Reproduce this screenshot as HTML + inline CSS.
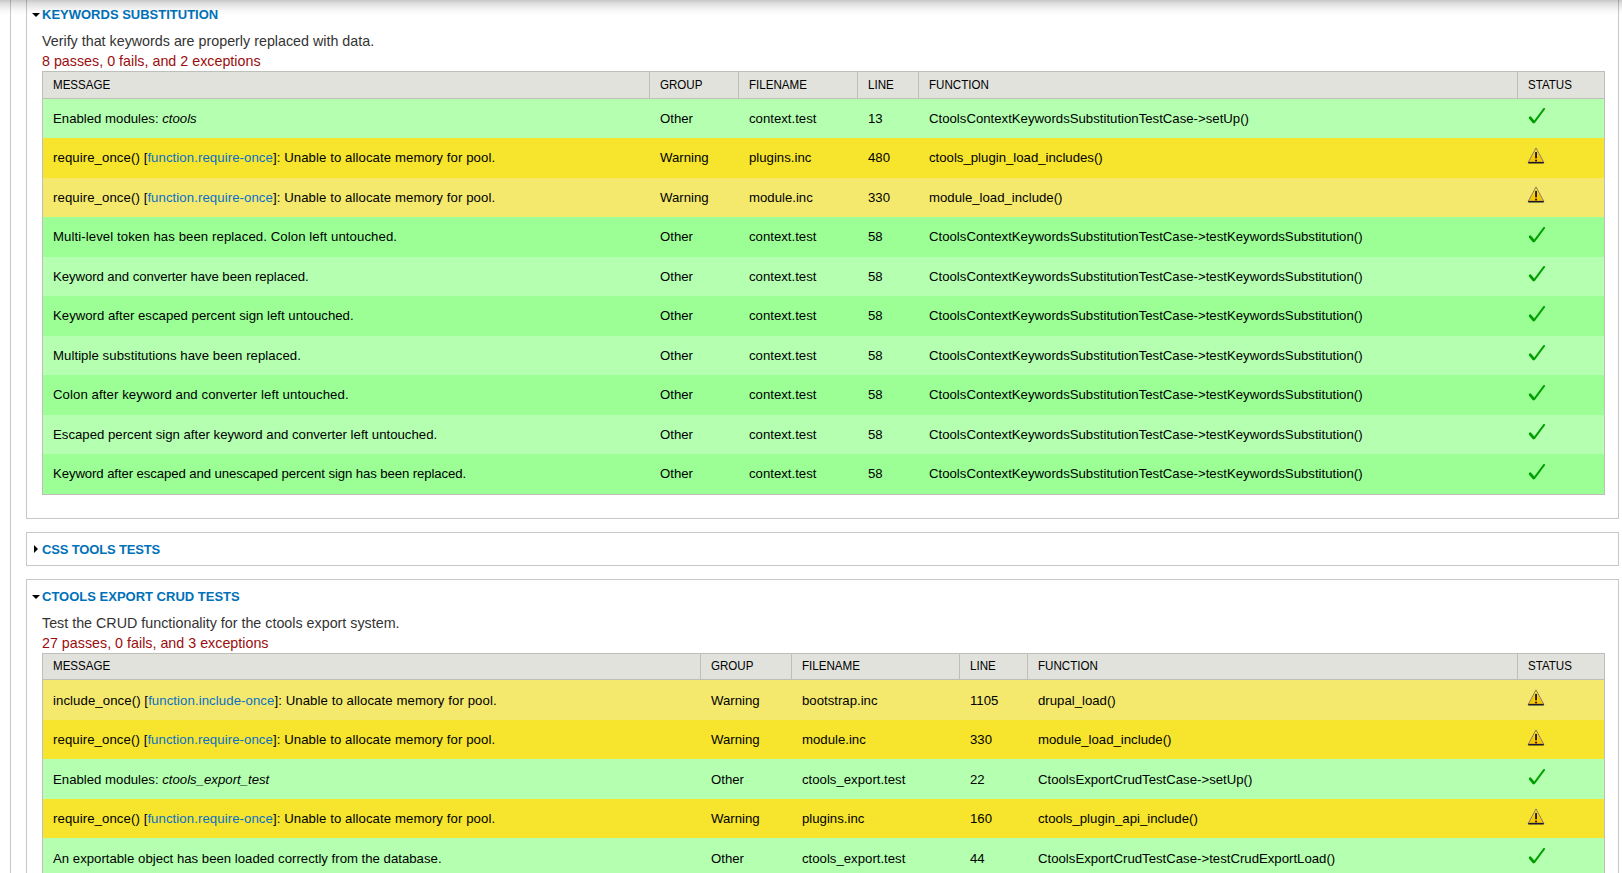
<!DOCTYPE html>
<html><head><meta charset="utf-8"><style>
html,body{margin:0;padding:0;background:#fff;width:1622px;height:873px;overflow:hidden;position:relative;font-family:"Liberation Sans",sans-serif;}
div{position:absolute;white-space:nowrap;}
.outer{left:10px;top:0;width:1px;height:873px;background:#c8c8c8}
.fs{border:1px solid #c8c8c8;box-sizing:border-box}
.legend{font-weight:bold;color:#0071b9}
.desc{color:#333}
.summary{color:#9b0d0d}
.tbl{border:1px solid #bebfb9;box-sizing:border-box;border-top:none}
.tbl>div{position:relative}
.thead{background:#e1e2dc;border:1px solid #bebfb9;box-sizing:border-box;margin:0 -1px;}
.vsep{width:1px;background:#bebfb9}
.th{font-size:12.2px;color:#000;display:flex;align-items:center;line-height:1}
.th span{display:inline-block;transform:scaleX(0.95);transform-origin:0 50%}
.tr{}
.td{font-size:13.2px;color:#000;display:flex;align-items:center;line-height:1}
.td a{color:#0a70c6;text-decoration:none}
.ls{letter-spacing:0.08px}
.td em{font-style:italic}
.icon{display:flex;align-items:center}
.icon svg{display:block}
.tbox{border:1px solid #bebfb9;box-sizing:border-box;border-top:none}
.arrow-down{width:0;height:0;border-left:4px solid transparent;border-right:4px solid transparent;border-top:4.9px solid #000}
.arrow-right{width:0;height:0;border-top:4.2px solid transparent;border-bottom:4.2px solid transparent;border-left:4.6px solid #000}
.shade{left:0;top:0;width:1622px;height:16px;background:linear-gradient(to bottom,rgba(0,0,0,.22) 0px,rgba(0,0,0,.14) 3px,rgba(0,0,0,.09) 6px,rgba(0,0,0,.035) 10px,rgba(0,0,0,0) 15px)}
</style></head><body>
<div class="outer"></div>
<div class="fs" style="left:26px;top:-2px;width:1593px;height:521px"></div>
<div class="arrow-down" style="left:32px;top:13px"></div>
<div class="legend" style="left:42px;top:4.60px;font-size:13px;line-height:20px">KEYWORDS SUBSTITUTION</div>
<div class="desc" style="left:42px;top:30.85px;font-size:14.3px;line-height:20px">Verify that keywords are properly replaced with data.</div>
<div class="summary" style="left:42px;top:51.05px;font-size:14.3px;line-height:20px">8 passes, 0 fails, and 2 exceptions</div>
<div class="tbl" style="top:71.4px;left:42px;width:1563px">
<div class="thead" style="height:27.2px">
<div class="th" style="left:10px;top:-0.3px;height:25.2px"><span>MESSAGE</span></div>
<div class="vsep" style="left:606px;top:0;height:27.2px"></div>
<div class="th" style="left:617px;top:-0.3px;height:25.2px"><span>GROUP</span></div>
<div class="vsep" style="left:695px;top:0;height:27.2px"></div>
<div class="th" style="left:706px;top:-0.3px;height:25.2px"><span>FILENAME</span></div>
<div class="vsep" style="left:814px;top:0;height:27.2px"></div>
<div class="th" style="left:825px;top:-0.3px;height:25.2px"><span>LINE</span></div>
<div class="vsep" style="left:875px;top:0;height:27.2px"></div>
<div class="th" style="left:886px;top:-0.3px;height:25.2px"><span>FUNCTION</span></div>
<div class="vsep" style="left:1474px;top:0;height:27.2px"></div>
<div class="th" style="left:1485px;top:-0.3px;height:25.2px"><span>STATUS</span></div>
</div>
<div class="tr" style="height:39.5px;background:#b4ffb0">
<div class="td" style="left:10px;top:0;height:39.5px"><span>Enabled modules: <em>ctools</em></span></div>
<div class="td" style="left:617px;top:0;height:39.5px"><span>Other</span></div>
<div class="td" style="left:706px;top:0;height:39.5px"><span>context.test</span></div>
<div class="td" style="left:825px;top:0;height:39.5px"><span>13</span></div>
<div class="td" style="left:886px;top:0;height:39.5px"><span>CtoolsContextKeywordsSubstitutionTestCase-&gt;setUp()</span></div>
<div class="icon" style="left:1483px;top:8.75px"><svg width="22" height="22" viewBox="0 0 22 22"><path d="M4.2 10.9 L7.6 14.9" fill="none" stroke="#009f00" stroke-width="2.9" stroke-linecap="round"/><path d="M6.5 15.7 L8.8 16.1 L18.9 2.4 L17.4 1.3 Z" fill="#009f00"/><circle cx="18.15" cy="1.85" r="0.95" fill="#009f00"/></svg></div>
</div>
<div class="tr" style="height:39.5px;background:#f6e42d">
<div class="td" style="left:10px;top:0;height:39.5px"><span><span class="ls">require_once() [<a>function.require-once</a>]: Unable to allocate memory for pool.</span></span></div>
<div class="td" style="left:617px;top:0;height:39.5px"><span>Warning</span></div>
<div class="td" style="left:706px;top:0;height:39.5px"><span>plugins.inc</span></div>
<div class="td" style="left:825px;top:0;height:39.5px"><span>480</span></div>
<div class="td" style="left:886px;top:0;height:39.5px"><span>ctools_plugin_load_includes()</span></div>
<div class="icon" style="left:1483px;top:8.75px"><svg width="22" height="22" viewBox="0 0 22 22"><defs><linearGradient id="wg" x1="0" y1="0" x2="0" y2="1"><stop offset="0" stop-color="#ffe600"/><stop offset="1" stop-color="#f6bf00"/></linearGradient></defs><path d="M10 0.9 L17.9 15.6 L2.1 15.6 Z" fill="url(#wg)" stroke="#857a8c" stroke-width="1" stroke-linejoin="round"/><rect x="2.3" y="14.9" width="15.4" height="1.6" fill="#1a1a2a"/><rect x="9.1" y="5" width="1.9" height="6.3" fill="#2a1a10"/><rect x="9.1" y="12.7" width="1.9" height="1.7" fill="#2a1a10"/></svg></div>
</div>
<div class="tr" style="height:39.5px;background:#f4e96d">
<div class="td" style="left:10px;top:0;height:39.5px"><span><span class="ls">require_once() [<a>function.require-once</a>]: Unable to allocate memory for pool.</span></span></div>
<div class="td" style="left:617px;top:0;height:39.5px"><span>Warning</span></div>
<div class="td" style="left:706px;top:0;height:39.5px"><span>module.inc</span></div>
<div class="td" style="left:825px;top:0;height:39.5px"><span>330</span></div>
<div class="td" style="left:886px;top:0;height:39.5px"><span>module_load_include()</span></div>
<div class="icon" style="left:1483px;top:8.75px"><svg width="22" height="22" viewBox="0 0 22 22"><defs><linearGradient id="wg" x1="0" y1="0" x2="0" y2="1"><stop offset="0" stop-color="#ffe600"/><stop offset="1" stop-color="#f6bf00"/></linearGradient></defs><path d="M10 0.9 L17.9 15.6 L2.1 15.6 Z" fill="url(#wg)" stroke="#857a8c" stroke-width="1" stroke-linejoin="round"/><rect x="2.3" y="14.9" width="15.4" height="1.6" fill="#1a1a2a"/><rect x="9.1" y="5" width="1.9" height="6.3" fill="#2a1a10"/><rect x="9.1" y="12.7" width="1.9" height="1.7" fill="#2a1a10"/></svg></div>
</div>
<div class="tr" style="height:39.5px;background:#9bff96">
<div class="td" style="left:10px;top:0;height:39.5px"><span><span style="letter-spacing:0.08px">Multi-level token has been replaced. Colon left untouched.</span></span></div>
<div class="td" style="left:617px;top:0;height:39.5px"><span>Other</span></div>
<div class="td" style="left:706px;top:0;height:39.5px"><span>context.test</span></div>
<div class="td" style="left:825px;top:0;height:39.5px"><span>58</span></div>
<div class="td" style="left:886px;top:0;height:39.5px"><span>CtoolsContextKeywordsSubstitutionTestCase-&gt;testKeywordsSubstitution()</span></div>
<div class="icon" style="left:1483px;top:8.75px"><svg width="22" height="22" viewBox="0 0 22 22"><path d="M4.2 10.9 L7.6 14.9" fill="none" stroke="#009f00" stroke-width="2.9" stroke-linecap="round"/><path d="M6.5 15.7 L8.8 16.1 L18.9 2.4 L17.4 1.3 Z" fill="#009f00"/><circle cx="18.15" cy="1.85" r="0.95" fill="#009f00"/></svg></div>
</div>
<div class="tr" style="height:39.5px;background:#b4ffb0">
<div class="td" style="left:10px;top:0;height:39.5px"><span><span style="letter-spacing:-0.08px">Keyword and converter have been replaced.</span></span></div>
<div class="td" style="left:617px;top:0;height:39.5px"><span>Other</span></div>
<div class="td" style="left:706px;top:0;height:39.5px"><span>context.test</span></div>
<div class="td" style="left:825px;top:0;height:39.5px"><span>58</span></div>
<div class="td" style="left:886px;top:0;height:39.5px"><span>CtoolsContextKeywordsSubstitutionTestCase-&gt;testKeywordsSubstitution()</span></div>
<div class="icon" style="left:1483px;top:8.75px"><svg width="22" height="22" viewBox="0 0 22 22"><path d="M4.2 10.9 L7.6 14.9" fill="none" stroke="#009f00" stroke-width="2.9" stroke-linecap="round"/><path d="M6.5 15.7 L8.8 16.1 L18.9 2.4 L17.4 1.3 Z" fill="#009f00"/><circle cx="18.15" cy="1.85" r="0.95" fill="#009f00"/></svg></div>
</div>
<div class="tr" style="height:39.5px;background:#9bff96">
<div class="td" style="left:10px;top:0;height:39.5px"><span>Keyword after escaped percent sign left untouched.</span></div>
<div class="td" style="left:617px;top:0;height:39.5px"><span>Other</span></div>
<div class="td" style="left:706px;top:0;height:39.5px"><span>context.test</span></div>
<div class="td" style="left:825px;top:0;height:39.5px"><span>58</span></div>
<div class="td" style="left:886px;top:0;height:39.5px"><span>CtoolsContextKeywordsSubstitutionTestCase-&gt;testKeywordsSubstitution()</span></div>
<div class="icon" style="left:1483px;top:8.75px"><svg width="22" height="22" viewBox="0 0 22 22"><path d="M4.2 10.9 L7.6 14.9" fill="none" stroke="#009f00" stroke-width="2.9" stroke-linecap="round"/><path d="M6.5 15.7 L8.8 16.1 L18.9 2.4 L17.4 1.3 Z" fill="#009f00"/><circle cx="18.15" cy="1.85" r="0.95" fill="#009f00"/></svg></div>
</div>
<div class="tr" style="height:39.5px;background:#b4ffb0">
<div class="td" style="left:10px;top:0;height:39.5px"><span><span style="letter-spacing:0.055px">Multiple substitutions have been replaced.</span></span></div>
<div class="td" style="left:617px;top:0;height:39.5px"><span>Other</span></div>
<div class="td" style="left:706px;top:0;height:39.5px"><span>context.test</span></div>
<div class="td" style="left:825px;top:0;height:39.5px"><span>58</span></div>
<div class="td" style="left:886px;top:0;height:39.5px"><span>CtoolsContextKeywordsSubstitutionTestCase-&gt;testKeywordsSubstitution()</span></div>
<div class="icon" style="left:1483px;top:8.75px"><svg width="22" height="22" viewBox="0 0 22 22"><path d="M4.2 10.9 L7.6 14.9" fill="none" stroke="#009f00" stroke-width="2.9" stroke-linecap="round"/><path d="M6.5 15.7 L8.8 16.1 L18.9 2.4 L17.4 1.3 Z" fill="#009f00"/><circle cx="18.15" cy="1.85" r="0.95" fill="#009f00"/></svg></div>
</div>
<div class="tr" style="height:39.5px;background:#9bff96">
<div class="td" style="left:10px;top:0;height:39.5px"><span><span style="letter-spacing:0.08px">Colon after keyword and converter left untouched.</span></span></div>
<div class="td" style="left:617px;top:0;height:39.5px"><span>Other</span></div>
<div class="td" style="left:706px;top:0;height:39.5px"><span>context.test</span></div>
<div class="td" style="left:825px;top:0;height:39.5px"><span>58</span></div>
<div class="td" style="left:886px;top:0;height:39.5px"><span>CtoolsContextKeywordsSubstitutionTestCase-&gt;testKeywordsSubstitution()</span></div>
<div class="icon" style="left:1483px;top:8.75px"><svg width="22" height="22" viewBox="0 0 22 22"><path d="M4.2 10.9 L7.6 14.9" fill="none" stroke="#009f00" stroke-width="2.9" stroke-linecap="round"/><path d="M6.5 15.7 L8.8 16.1 L18.9 2.4 L17.4 1.3 Z" fill="#009f00"/><circle cx="18.15" cy="1.85" r="0.95" fill="#009f00"/></svg></div>
</div>
<div class="tr" style="height:39.5px;background:#b4ffb0">
<div class="td" style="left:10px;top:0;height:39.5px"><span>Escaped percent sign after keyword and converter left untouched.</span></div>
<div class="td" style="left:617px;top:0;height:39.5px"><span>Other</span></div>
<div class="td" style="left:706px;top:0;height:39.5px"><span>context.test</span></div>
<div class="td" style="left:825px;top:0;height:39.5px"><span>58</span></div>
<div class="td" style="left:886px;top:0;height:39.5px"><span>CtoolsContextKeywordsSubstitutionTestCase-&gt;testKeywordsSubstitution()</span></div>
<div class="icon" style="left:1483px;top:8.75px"><svg width="22" height="22" viewBox="0 0 22 22"><path d="M4.2 10.9 L7.6 14.9" fill="none" stroke="#009f00" stroke-width="2.9" stroke-linecap="round"/><path d="M6.5 15.7 L8.8 16.1 L18.9 2.4 L17.4 1.3 Z" fill="#009f00"/><circle cx="18.15" cy="1.85" r="0.95" fill="#009f00"/></svg></div>
</div>
<div class="tr" style="height:39.5px;background:#9bff96">
<div class="td" style="left:10px;top:0;height:39.5px"><span><span style="letter-spacing:-0.105px">Keyword after escaped and unescaped percent sign has been replaced.</span></span></div>
<div class="td" style="left:617px;top:0;height:39.5px"><span>Other</span></div>
<div class="td" style="left:706px;top:0;height:39.5px"><span>context.test</span></div>
<div class="td" style="left:825px;top:0;height:39.5px"><span>58</span></div>
<div class="td" style="left:886px;top:0;height:39.5px"><span>CtoolsContextKeywordsSubstitutionTestCase-&gt;testKeywordsSubstitution()</span></div>
<div class="icon" style="left:1483px;top:8.75px"><svg width="22" height="22" viewBox="0 0 22 22"><path d="M4.2 10.9 L7.6 14.9" fill="none" stroke="#009f00" stroke-width="2.9" stroke-linecap="round"/><path d="M6.5 15.7 L8.8 16.1 L18.9 2.4 L17.4 1.3 Z" fill="#009f00"/><circle cx="18.15" cy="1.85" r="0.95" fill="#009f00"/></svg></div>
</div>
</div>
<div class="fs" style="left:26px;top:532px;width:1593px;height:34px"></div>
<div class="arrow-right" style="left:33.8px;top:544.8px"></div>
<div class="legend" style="left:42px;top:539.90px;font-size:13px;line-height:20px"><span style="letter-spacing:-0.15px">CSS TOOLS TESTS</span></div>
<div class="fs" style="left:26px;top:579px;width:1593px;height:400px"></div>
<div class="arrow-down" style="left:32px;top:595px"></div>
<div class="legend" style="left:42px;top:586.60px;font-size:13px;line-height:20px">CTOOLS EXPORT CRUD TESTS</div>
<div class="desc" style="left:42px;top:612.85px;font-size:14.3px;line-height:20px">Test the CRUD functionality for the ctools export system.</div>
<div class="summary" style="left:42px;top:633.05px;font-size:14.3px;line-height:20px">27 passes, 0 fails, and 3 exceptions</div>
<div class="tbl" style="top:653.3px;left:42px;width:1563px">
<div class="thead" style="height:27.2px">
<div class="th" style="left:10px;top:-0.3px;height:25.2px"><span>MESSAGE</span></div>
<div class="vsep" style="left:657px;top:0;height:27.2px"></div>
<div class="th" style="left:668px;top:-0.3px;height:25.2px"><span>GROUP</span></div>
<div class="vsep" style="left:748px;top:0;height:27.2px"></div>
<div class="th" style="left:759px;top:-0.3px;height:25.2px"><span>FILENAME</span></div>
<div class="vsep" style="left:916px;top:0;height:27.2px"></div>
<div class="th" style="left:927px;top:-0.3px;height:25.2px"><span>LINE</span></div>
<div class="vsep" style="left:984px;top:0;height:27.2px"></div>
<div class="th" style="left:995px;top:-0.3px;height:25.2px"><span>FUNCTION</span></div>
<div class="vsep" style="left:1474px;top:0;height:27.2px"></div>
<div class="th" style="left:1485px;top:-0.3px;height:25.2px"><span>STATUS</span></div>
</div>
<div class="tr" style="height:39.5px;background:#f4e96d">
<div class="td" style="left:10px;top:0;height:39.5px"><span><span class="ls">include_once() [<a>function.include-once</a>]: Unable to allocate memory for pool.</span></span></div>
<div class="td" style="left:668px;top:0;height:39.5px"><span>Warning</span></div>
<div class="td" style="left:759px;top:0;height:39.5px"><span>bootstrap.inc</span></div>
<div class="td" style="left:927px;top:0;height:39.5px"><span>1105</span></div>
<div class="td" style="left:995px;top:0;height:39.5px"><span>drupal_load()</span></div>
<div class="icon" style="left:1483px;top:8.75px"><svg width="22" height="22" viewBox="0 0 22 22"><defs><linearGradient id="wg" x1="0" y1="0" x2="0" y2="1"><stop offset="0" stop-color="#ffe600"/><stop offset="1" stop-color="#f6bf00"/></linearGradient></defs><path d="M10 0.9 L17.9 15.6 L2.1 15.6 Z" fill="url(#wg)" stroke="#857a8c" stroke-width="1" stroke-linejoin="round"/><rect x="2.3" y="14.9" width="15.4" height="1.6" fill="#1a1a2a"/><rect x="9.1" y="5" width="1.9" height="6.3" fill="#2a1a10"/><rect x="9.1" y="12.7" width="1.9" height="1.7" fill="#2a1a10"/></svg></div>
</div>
<div class="tr" style="height:39.5px;background:#f6e42d">
<div class="td" style="left:10px;top:0;height:39.5px"><span><span class="ls">require_once() [<a>function.require-once</a>]: Unable to allocate memory for pool.</span></span></div>
<div class="td" style="left:668px;top:0;height:39.5px"><span>Warning</span></div>
<div class="td" style="left:759px;top:0;height:39.5px"><span>module.inc</span></div>
<div class="td" style="left:927px;top:0;height:39.5px"><span>330</span></div>
<div class="td" style="left:995px;top:0;height:39.5px"><span>module_load_include()</span></div>
<div class="icon" style="left:1483px;top:8.75px"><svg width="22" height="22" viewBox="0 0 22 22"><defs><linearGradient id="wg" x1="0" y1="0" x2="0" y2="1"><stop offset="0" stop-color="#ffe600"/><stop offset="1" stop-color="#f6bf00"/></linearGradient></defs><path d="M10 0.9 L17.9 15.6 L2.1 15.6 Z" fill="url(#wg)" stroke="#857a8c" stroke-width="1" stroke-linejoin="round"/><rect x="2.3" y="14.9" width="15.4" height="1.6" fill="#1a1a2a"/><rect x="9.1" y="5" width="1.9" height="6.3" fill="#2a1a10"/><rect x="9.1" y="12.7" width="1.9" height="1.7" fill="#2a1a10"/></svg></div>
</div>
<div class="tr" style="height:39.5px;background:#b4ffb0">
<div class="td" style="left:10px;top:0;height:39.5px"><span>Enabled modules: <em>ctools_export_test</em></span></div>
<div class="td" style="left:668px;top:0;height:39.5px"><span>Other</span></div>
<div class="td" style="left:759px;top:0;height:39.5px"><span>ctools_export.test</span></div>
<div class="td" style="left:927px;top:0;height:39.5px"><span>22</span></div>
<div class="td" style="left:995px;top:0;height:39.5px"><span>CtoolsExportCrudTestCase-&gt;setUp()</span></div>
<div class="icon" style="left:1483px;top:8.75px"><svg width="22" height="22" viewBox="0 0 22 22"><path d="M4.2 10.9 L7.6 14.9" fill="none" stroke="#009f00" stroke-width="2.9" stroke-linecap="round"/><path d="M6.5 15.7 L8.8 16.1 L18.9 2.4 L17.4 1.3 Z" fill="#009f00"/><circle cx="18.15" cy="1.85" r="0.95" fill="#009f00"/></svg></div>
</div>
<div class="tr" style="height:39.5px;background:#f6e42d">
<div class="td" style="left:10px;top:0;height:39.5px"><span><span class="ls">require_once() [<a>function.require-once</a>]: Unable to allocate memory for pool.</span></span></div>
<div class="td" style="left:668px;top:0;height:39.5px"><span>Warning</span></div>
<div class="td" style="left:759px;top:0;height:39.5px"><span>plugins.inc</span></div>
<div class="td" style="left:927px;top:0;height:39.5px"><span>160</span></div>
<div class="td" style="left:995px;top:0;height:39.5px"><span>ctools_plugin_api_include()</span></div>
<div class="icon" style="left:1483px;top:8.75px"><svg width="22" height="22" viewBox="0 0 22 22"><defs><linearGradient id="wg" x1="0" y1="0" x2="0" y2="1"><stop offset="0" stop-color="#ffe600"/><stop offset="1" stop-color="#f6bf00"/></linearGradient></defs><path d="M10 0.9 L17.9 15.6 L2.1 15.6 Z" fill="url(#wg)" stroke="#857a8c" stroke-width="1" stroke-linejoin="round"/><rect x="2.3" y="14.9" width="15.4" height="1.6" fill="#1a1a2a"/><rect x="9.1" y="5" width="1.9" height="6.3" fill="#2a1a10"/><rect x="9.1" y="12.7" width="1.9" height="1.7" fill="#2a1a10"/></svg></div>
</div>
<div class="tr" style="height:39.5px;background:#b4ffb0">
<div class="td" style="left:10px;top:0;height:39.5px"><span>An exportable object has been loaded correctly from the database.</span></div>
<div class="td" style="left:668px;top:0;height:39.5px"><span>Other</span></div>
<div class="td" style="left:759px;top:0;height:39.5px"><span>ctools_export.test</span></div>
<div class="td" style="left:927px;top:0;height:39.5px"><span>44</span></div>
<div class="td" style="left:995px;top:0;height:39.5px"><span>CtoolsExportCrudTestCase-&gt;testCrudExportLoad()</span></div>
<div class="icon" style="left:1483px;top:8.75px"><svg width="22" height="22" viewBox="0 0 22 22"><path d="M4.2 10.9 L7.6 14.9" fill="none" stroke="#009f00" stroke-width="2.9" stroke-linecap="round"/><path d="M6.5 15.7 L8.8 16.1 L18.9 2.4 L17.4 1.3 Z" fill="#009f00"/><circle cx="18.15" cy="1.85" r="0.95" fill="#009f00"/></svg></div>
</div>
</div>
<div class="shade"></div>
</body></html>
